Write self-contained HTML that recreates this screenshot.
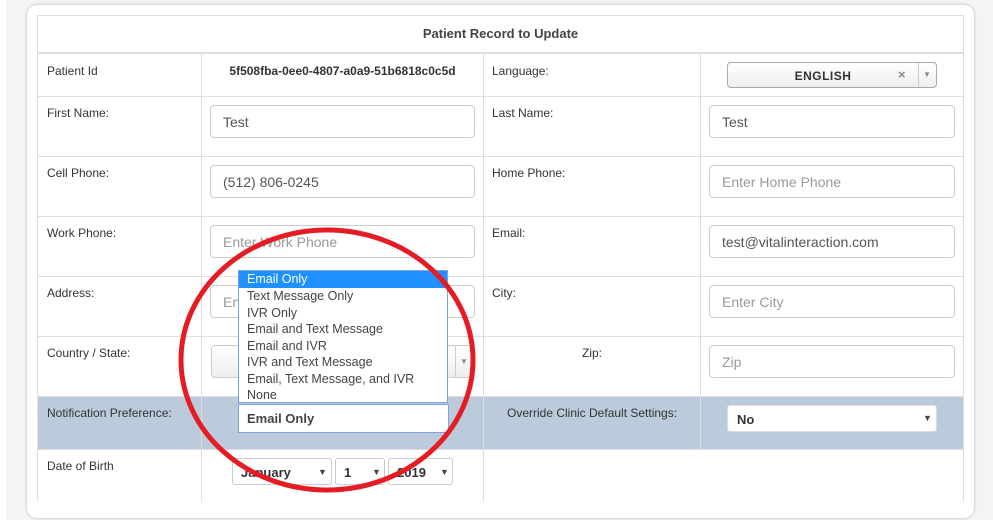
<!DOCTYPE html>
<html><head><style>
*{box-sizing:border-box}
body{margin:0;width:993px;height:520px;background:#f3f4f6;font-family:"Liberation Sans",sans-serif;position:relative;overflow:hidden;color:#333}
.card{position:absolute;left:27px;top:5px;width:947px;height:513px;background:#fff;border-radius:10px;box-shadow:0 0 3px rgba(0,0,0,.25)}
.a{position:absolute}
.hl{position:absolute;height:1px;background:#ddd}
.vl{position:absolute;width:1px;background:#ddd}
.lbl{position:absolute;font-size:12px;color:#333}
.inp{position:absolute;height:33px;border:1px solid #ccc;border-radius:4px;font-size:14px;padding:8px 12px;color:#555;background:#fff}
.ph{color:#999}
.sel{position:absolute;border:1px solid #ccc;border-radius:3px;background:#fff;font-size:13px;font-weight:bold;color:#333}
.arr{position:absolute;font-size:9px;color:#444}
</style></head><body>
<div class="a" style="left:0;top:0;width:6px;height:520px;background:#fff"></div>
<div class="card"></div>
<div class="a" style="left:37px;top:396px;width:927px;height:53px;background:#bccbdb"></div>
<!-- table lines -->
<div class="hl" style="left:37px;top:15px;width:927px"></div>
<div class="hl" style="left:37px;top:52px;width:927px;height:2px"></div>
<div class="hl" style="left:37px;top:96px;width:927px"></div>
<div class="hl" style="left:37px;top:156px;width:927px"></div>
<div class="hl" style="left:37px;top:216px;width:927px"></div>
<div class="hl" style="left:37px;top:276px;width:927px"></div>
<div class="hl" style="left:37px;top:336px;width:927px"></div>
<div class="hl" style="left:37px;top:396px;width:927px"></div>
<div class="hl" style="left:37px;top:449px;width:927px"></div>
<div class="vl" style="left:37px;top:15px;height:486px"></div>
<div class="vl" style="left:963px;top:15px;height:486px"></div>
<div class="vl" style="left:201px;top:53px;height:448px"></div>
<div class="vl" style="left:483px;top:53px;height:448px"></div>
<div class="vl" style="left:700px;top:53px;height:396px"></div>
<div class="a" style="left:37px;top:26px;width:927px;text-align:center;font-size:13px;font-weight:bold;color:#444">Patient Record to Update</div>
<div class="lbl" style="left:47px;top:64px">Patient Id</div>
<div class="a" style="left:202px;top:64px;width:281px;text-align:center;font-size:12px;font-weight:bold;color:#333">5f508fba-0ee0-4807-a0a9-51b6818c0c5d</div>
<div class="lbl" style="left:492px;top:64px">Language:</div>
<div class="sel" style="left:727px;top:62px;width:210px;height:26px;background:linear-gradient(#fff,#eee);border-color:#aaa;border-radius:4px"><span class="a" style="left:0;width:190px;top:6px;text-align:center;font-size:12px;letter-spacing:.5px">ENGLISH</span><span class="a" style="left:170px;top:4px;color:#888;font-size:13px">×</span><span class="a" style="left:190px;top:0;width:1px;height:24px;background:#ccc"></span><span class="arr" style="left:195px;top:7px;color:#888;font-size:8px">▼</span></div>
<div class="lbl" style="left:47px;top:106px">First Name:</div>
<div class="inp" style="left:210px;top:105px;width:265px">Test</div>
<div class="lbl" style="left:492px;top:106px">Last Name:</div>
<div class="inp" style="left:709px;top:105px;width:246px">Test</div>
<div class="lbl" style="left:47px;top:166px">Cell Phone:</div>
<div class="inp" style="left:210px;top:165px;width:265px">(512) 806-0245</div>
<div class="lbl" style="left:492px;top:166px">Home Phone:</div>
<div class="inp ph" style="left:709px;top:165px;width:246px">Enter Home Phone</div>
<div class="lbl" style="left:47px;top:226px">Work Phone:</div>
<div class="inp ph" style="left:210px;top:225px;width:265px">Enter Work Phone</div>
<div class="lbl" style="left:492px;top:226px">Email:</div>
<div class="inp" style="left:709px;top:225px;width:246px">test@vitalinteraction.com</div>
<div class="lbl" style="left:47px;top:286px">Address:</div>
<div class="inp ph" style="left:210px;top:285px;width:265px">Enter Address</div>
<div class="lbl" style="left:492px;top:286px">City:</div>
<div class="inp ph" style="left:709px;top:285px;width:246px">Enter City</div>
<div class="lbl" style="left:47px;top:346px">Country / State:</div>
<div class="sel" style="left:211px;top:345px;width:261px;height:33px;background:linear-gradient(#fff,#eee);border-radius:4px"><span class="a" style="left:243px;top:0;width:1px;height:31px;background:#ccc"></span><span class="arr" style="left:248px;top:11px;color:#888;font-size:8px">▼</span></div>
<div class="lbl" style="left:582px;top:346px">Zip:</div>
<div class="inp ph" style="left:709px;top:345px;width:246px">Zip</div>
<div class="lbl" style="left:47px;top:406px">Notification Preference:</div>
<div class="lbl" style="left:507px;top:406px">Override Clinic Default Settings:</div>
<div class="sel" style="left:727px;top:405px;width:210px;height:27px;border-color:#ddd"><span class="a" style="left:9px;top:6px">No</span><span class="arr" style="left:195px;top:7px">▼</span></div>
<div class="lbl" style="left:47px;top:459px">Date of Birth</div>
<div class="sel" style="left:232px;top:458px;width:100px;height:27px"><span class="a" style="left:8px;top:6px">January</span><span class="arr" style="left:85px;top:8px">▼</span></div>
<div class="sel" style="left:335px;top:458px;width:50px;height:27px"><span class="a" style="left:8px;top:6px">1</span><span class="arr" style="left:36px;top:8px">▼</span></div>
<div class="sel" style="left:388px;top:458px;width:65px;height:27px"><span class="a" style="left:8px;top:6px">2019</span><span class="arr" style="left:51px;top:8px">▼</span></div>
<!-- dropdown -->
<div class="a" style="left:238px;top:404px;width:211px;height:29px;background:#fff;border:1px solid #7fa2dc;font-size:13px;font-weight:bold;color:#444;padding:6px 8px">Email Only</div>
<div class="a" style="left:238px;top:270px;width:210px;height:133px;background:#fff;border:1px solid #7fa2dc;font-size:12.5px;color:#444;line-height:16.5px">
<div style="background:#1e90ff;color:#fff;padding-left:8px;height:17px">Email Only</div>
<div style="padding-left:8px">Text Message Only</div>
<div style="padding-left:8px">IVR Only</div>
<div style="padding-left:8px">Email and Text Message</div>
<div style="padding-left:8px">Email and IVR</div>
<div style="padding-left:8px">IVR and Text Message</div>
<div style="padding-left:8px">Email, Text Message, and IVR</div>
<div style="padding-left:8px">None</div>
</div>
<svg class="a" style="left:0;top:0" width="993" height="520"><ellipse cx="327" cy="360" rx="146" ry="130" fill="none" stroke="#e51c24" stroke-width="5"/></svg>
</body></html>
